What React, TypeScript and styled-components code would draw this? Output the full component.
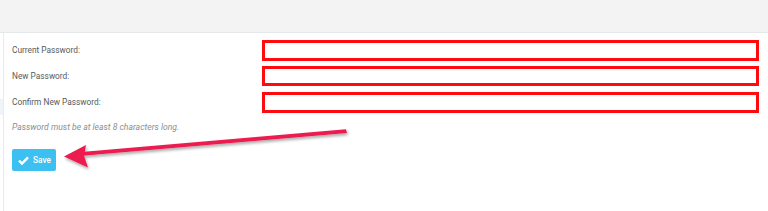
import { Fragment } from "react";
import styled, { createGlobalStyle } from "styled-components";

const GlobalStyle = createGlobalStyle`
  html, body {
    margin: 0;
    padding: 0;
    background: #ffffff;
    font-family: Roboto, "Liberation Sans", Arial, sans-serif;
  }
`;

const Page = styled.div`
  position: relative;
  width: 768px;
  height: 211px;
  overflow: hidden;
  background: #ffffff;
`;

const HeaderBand = styled.div`
  height: 32px;
  background: #f3f3f3;
  border-bottom: 1px solid #e4e8e8;
`;

const Body = styled.div`
  display: flex;
  height: 178px;
`;

const SideEdge = styled.div`
  width: 3px;
  border-right: 1px solid #e9ecec;
  background: linear-gradient(
    to bottom,
    #ffffff 0,
    #ffffff 66px,
    #eef4f8 66px,
    #eef4f8 82px,
    #ffffff 82px
  );
`;

const Form = styled.form`
  flex: 1;
  padding: 7px 9px 0 8px;
`;

const Fields = styled.div`
  display: grid;
  grid-template-columns: 250px 497px;
  grid-auto-rows: 21px;
  row-gap: 5px;
`;

const Label = styled.label`
  display: flex;
  align-items: center;
  font-size: 8.3px;
  color: #555a5c;
  padding-bottom: 1px;
`;

const Input = styled.input<{ $h?: number }>`
  box-sizing: border-box;
  width: 100%;
  height: ${(p) => p.$h ?? 21}px;
  margin: 0;
  border: 3px solid #ff0a0f;
  background: #ffffff;
  outline: none;
  padding: 0 4px;
`;

const Help = styled.p`
  margin: 9px 0 0;
  font-size: 8.6px;
  font-style: italic;
  color: #8a8f90;
  line-height: 10px;
`;

const SaveButton = styled.button`
  margin-top: 17px;
  display: inline-flex;
  align-items: center;
  gap: 4px;
  width: 44px;
  height: 22px;
  padding: 0 0 0 6px;
  border: none;
  border-radius: 2px;
  background: #3cc0f2;
  color: #ffffff;
  font-family: Roboto, "Liberation Sans", Arial, sans-serif;
  font-size: 8.3px;
  font-weight: 500;
  cursor: pointer;
`;

const ArrowLayer = styled.svg`
  position: absolute;
  left: 0;
  top: 0;
  pointer-events: none;
`;

const fields = ["Current Password:", "New Password:", "Confirm New Password:"];

export default function App() {
  return (
    <>
      <GlobalStyle />
      <Page>
        <HeaderBand />
        <Body>
          <SideEdge />
          <Form onSubmit={(e) => e.preventDefault()}>
            <Fields>
              {fields.map((f) => (
                <Fragment key={f}>
                  <Label>{f}</Label>
                  <Input type="password" $h={f === "New Password:" ? 20 : 21} />
                </Fragment>
              ))}
            </Fields>
            <Help>Password must be at least 8 characters long.</Help>
            <SaveButton type="submit">
              <svg width="11" height="9" viewBox="0 0 11 9">
                <path d="M1 4.6 L4 7.6 L10 1.4" fill="none" stroke="#fff" strokeWidth="2.4" strokeLinejoin="miter" />
              </svg>
              Save
            </SaveButton>
          </Form>
        </Body>
        <ArrowLayer width="768" height="211" viewBox="0 0 768 211">
          <defs>
            <filter id="sh" x="-10%" y="-50%" width="120%" height="200%">
              <feDropShadow dx="1" dy="2" stdDeviation="1.5" floodColor="#000" floodOpacity="0.35" />
            </filter>
          </defs>
          <g filter="url(#sh)" fill="#ec1a4f">
            <path d="M346 129.2 L347 133 L82 155.8 L81.5 152 Z" />
            <path d="M64 156.5 L86 145 L84 156 L88 167.5 Z" />
          </g>
        </ArrowLayer>
      </Page>
    </>
  );
}
